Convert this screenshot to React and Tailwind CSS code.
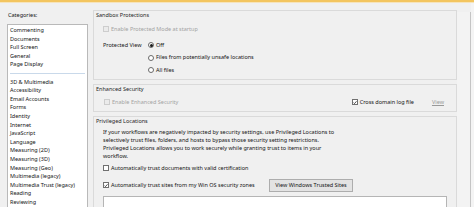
import React from 'react';

const categories1 = ['Commenting', 'Documents', 'Full Screen', 'General', 'Page Display'];
const categories2 = [
  '3D & Multimedia',
  'Accessibility',
  'Email Accounts',
  'Forms',
  'Identity',
  'Internet',
  'JavaScript',
  'Language',
  'Measuring (2D)',
  'Measuring (3D)',
  'Measuring (Geo)',
  'Multimedia (legacy)',
  'Multimedia Trust (legacy)',
  'Reading',
  'Reviewing',
];

const paragraph = [
  'If your workflows are negatively impacted by security settings, use Privileged Locations to',
  'selectively trust files, folders, and hosts to bypass those security setting restrictions.',
  'Privileged Locations allows you to work securely while granting trust to items in your',
  'workflow.',
];

const Check = ({ checked, disabled }) => (
  <span
    className={`w-[6px] h-[6px] border shrink-0 flex items-center justify-center ${
      disabled ? 'border-[#cdcdcd] bg-[#ebebeb]' : 'border-[#707070] bg-white'
    }`}
  >
    {checked && (
      <svg viewBox="0 0 8 8" className="w-[5px] h-[5px]">
        <path d="M1 4.2 L3 6.2 L7 1.5" fill="none" stroke="#1a1a1a" strokeWidth="1.5" />
      </svg>
    )}
  </span>
);

const Radio = ({ checked }) => (
  <span className="w-[6px] h-[6px] rounded-full border border-[#6a6a6a] bg-white shrink-0 flex items-center justify-center">
    {checked && <span className="w-[3px] h-[3px] rounded-full bg-[#1a1a1a]" />}
  </span>
);

const Section = ({ title, className = '', children }) => (
  <div className={`border border-[#dadada] shrink-0 ${className}`}>
    <div className="h-[8px] leading-[8px] pl-[2px] text-[#1e1e1e]">{title}</div>
    {children}
  </div>
);

export default function App() {
  return (
    <div
      className="w-[474px] h-[207px] overflow-hidden bg-[#f0f0f0] text-[5.5px] text-[#141414]"
      style={{ fontFamily: '"Noto Sans", "Open Sans", sans-serif' }}
    >
      <div className="h-[2px] bg-[#f3c55f]" />
      <div className="h-[1px] bg-[#f6e4bc]" />
      <div className="flex h-[204px]">
        {/* left: categories */}
        <div className="w-[93px] shrink-0 pl-[7px] pt-[8px]">
          <div className="h-[8px] leading-[8px] pl-[1px]">Categories:</div>
          <div className="mt-[5px] w-[81px] h-[200px] bg-white border border-[#b9b9b9] pl-[2px] pt-[1px]">
            {categories1.map((c) => (
              <div key={c} className="h-[8.6px] leading-[8.6px] whitespace-nowrap">
                {c}
              </div>
            ))}
            <div className="h-[8.6px] flex items-center pr-[2px]">
              <div className="h-[1px] w-full bg-[#c9d9ea]" />
            </div>
            {categories2.map((c) => (
              <div key={c} className="h-[8.6px] leading-[8.6px] whitespace-nowrap">
                {c}
              </div>
            ))}
          </div>
        </div>

        {/* right: panels */}
        <div className="w-[364px] shrink-0 pt-[7px] flex flex-col gap-[4px]">
          <Section title="Sandbox Protections" className="h-[70px]">
            <div className="pl-[9px] pt-[5.5px] flex flex-col">
              <div className="flex items-center gap-[2px] h-[9px] text-[#a3a3a3]">
                <Check disabled />
                <span>Enable Protected Mode at startup</span>
              </div>
              <div className="flex mt-[7px]">
                <div className="w-[45px] h-[9px] leading-[9px]">Protected View</div>
                <div className="flex flex-col gap-[3.5px]">
                  <div className="flex items-center gap-[2px] h-[9px]">
                    <Radio checked />
                    <span>Off</span>
                  </div>
                  <div className="flex items-center gap-[2px] h-[9px]">
                    <Radio />
                    <span>Files from potentially unsafe locations</span>
                  </div>
                  <div className="flex items-center gap-[2px] h-[9px]">
                    <Radio />
                    <span>All files</span>
                  </div>
                </div>
              </div>
            </div>
          </Section>

          <Section title="Enhanced Security" className="h-[28px]">
            <div className="pl-[10px] pr-[12px] pt-[3.5px] flex items-center h-[14.5px]">
              <div className="flex items-center gap-[2px] text-[#a3a3a3]">
                <Check disabled />
                <span>Enable Enhanced Security</span>
              </div>
              <div className="ml-auto flex items-center gap-[2px] mr-[18px]">
                <Check checked />
                <span>Cross domain log file</span>
              </div>
              <span className="text-[#999] underline">View</span>
            </div>
          </Section>

          <Section title="Privileged Locations" className="flex-1">
            <div className="pl-[9px] pr-[8px] pt-[3px]">
              <p className="leading-[8px] whitespace-nowrap">
                {paragraph.map((l, i) => (
                  <React.Fragment key={i}>
                    {l}
                    {i < paragraph.length - 1 && <br />}
                  </React.Fragment>
                ))}
              </p>
              <div className="flex items-center gap-[2px] h-[9px] mt-[3.5px]">
                <Check />
                <span>Automatically trust documents with valid certification</span>
              </div>
              <div className="flex items-center h-[14px] mt-[5.5px]">
                <div className="flex items-center gap-[2px] w-[166px] shrink-0">
                  <Check checked />
                  <span>Automatically trust sites from my Win OS security zones</span>
                </div>
                <div className="w-[84px] h-[13px] shrink-0 border border-[#adadad] bg-[#e3e3e3] flex items-center justify-center whitespace-nowrap">
                  View Windows Trusted Sites
                </div>
              </div>
              <div className="mt-[4px] w-[344px] h-[20px] bg-white border border-[#b5b5b5]" />
            </div>
          </Section>
        </div>

        {/* scroll gutter */}
        <div className="w-[14px] shrink-0 bg-[#f3f3f3] mt-[9px] border-r border-[#c4c4c4]" />
        <div className="flex-1 bg-[#f4f4f4]" />
      </div>
    </div>
  );
}
